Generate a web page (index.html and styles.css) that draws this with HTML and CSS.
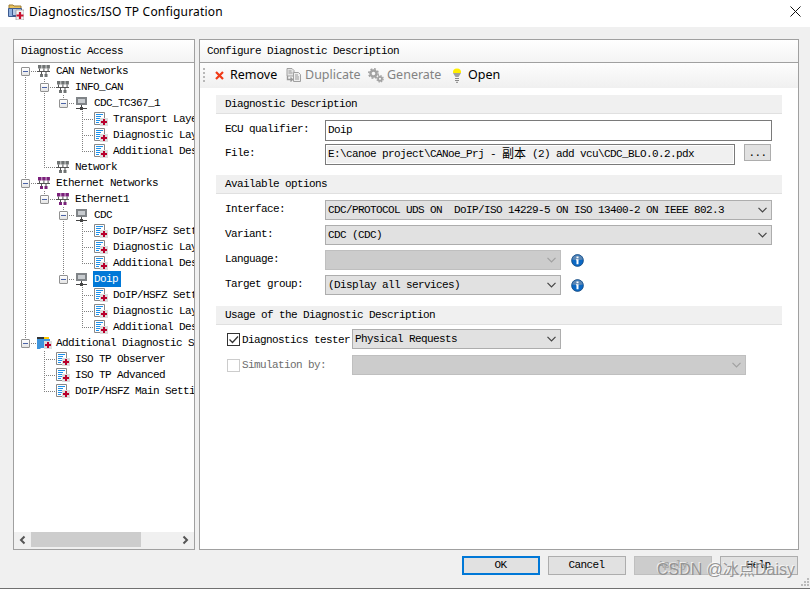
FILE: index.html
```html
<!DOCTYPE html>
<html lang="en">
<head>
  <meta charset="UTF-8">
  <meta name="viewport" content="width=device-width, initial-scale=1.0">
  <title>Diagnostics/ISO TP Configuration</title>
  <link rel="stylesheet" href="styles.css">
</head>
<body>

  <!-- shared icons -->
  <svg class="defs" width="0" height="0">
    <symbol id="net" viewBox="0 0 16 16">
      <path d="M1 2h3.500v3.500H1zM5.200 2h3.500v3.500H5.200zM9.400 2h3.500v3.500H9.400zM3 11h3v3H3zM7.500 11h3v3h-3z" fill="currentColor"/>
      <path d="M0 8.500h13M2.500 5.500v3M6.900 5.500v3M11.100 5.500v3M4.500 8.500v3M9 8.500v3" stroke="#555" fill="none"/>
    </symbol>
    <symbol id="ecu" viewBox="0 0 16 16">
      <path d="M2 3h9v6H2z" fill="#c8ccd0" stroke="#808488" stroke-width="2"/>
      <path d="M6.500 10v3M1 13.500h11" stroke="#444" fill="none"/>
      <path d="M5 12h3v3H5z" fill="#444"/>
    </symbol>
    <symbol id="doc" viewBox="0 0 16 16">
      <path d="M.5 1.500h10v12H.5z" fill="#fff" stroke="#888"/>
      <path d="M2 3.500h7M2 5.500h5M2 7.500h6M2 9.500h4M2 11.500h3" stroke="#1e90ea" fill="none"/>
      <path d="M6 7h8v8H6z" fill="#dcdcdc"/>
      <path d="M10 8v6M7 11h6" stroke="#b8002c" stroke-width="2" fill="none"/>
    </symbol>
    <symbol id="folder" viewBox="0 0 16 16">
      <path d="M0 2h7v2H0z" fill="#333"/>
      <path d="M7 2h5v2H7z" fill="#ffc800"/>
      <path d="M0 4h13v9H4l-1 1H0z" fill="#3d94dc"/>
      <path d="M7 6h8v8H7z" fill="#dcdcdc"/>
      <path d="M11 7v6M8 10h6" stroke="#b8002c" stroke-width="2" fill="none"/>
    </symbol>
    <symbol id="arrow" viewBox="0 0 9 6">
      <path d="M.5 .8l4 4 4-4" fill="none" stroke="currentColor" stroke-width="1.200"/>
    </symbol>
    <symbol id="info" viewBox="0 0 13 13">
      <circle cx="6.500" cy="6.500" r="5.900" fill="#0b68c4" stroke="#164678" stroke-width=".8"/>
      <path d="M1.200 5.600a5.400 5.400 0 0 1 10.600 0q-5.300 1.500-10.600 0z" fill="#5a86b4"/>
      <path d="M5.500 2.500h2v1.700h-2zM5 5.200h2.500v5h-2v-4H5z" fill="#fff"/>
    </symbol>
  </svg>

  <div class="window">
    <div class="titlebar">
      <svg class="app-icon" width="16" height="16" viewBox="0 0 16 16">
        <path d="M1 1h4l1 1h7v9H1z" fill="#e9c25c" stroke="#9c7a34"/>
        <path d="M.5 4.500h12v8H.5z" fill="#8fb0de" stroke="#3c5a90"/>
        <path d="M4.500 4.500h9v7h-9z" fill="#b7cbe8" stroke="#3c5a90"/>
        <path d="M8 6h8v10H8z" fill="#f2f2f2" stroke="#888" stroke-width=".6"/>
        <path d="M12 8v7M8.500 11.500h7" stroke="#c8102e" stroke-width="2.200"/>
      </svg>
      <span class="title">Diagnostics/ISO TP Configuration</span>
      <svg class="close" width="11" height="11" viewBox="0 0 11 11"><path d="M.5 .5l10 10M10.500 .5l-10 10" stroke="#111" fill="none"/></svg>
    </div>

    <div class="panels">
      <div class="panel left">
        <div class="panel-head">Diagnostic Access</div>
        <ul class="tree">
          <li>
            <div class="node"><i class="exp"></i><svg class="ico can"><use href="#net"/></svg><span>CAN Networks</span></div>
            <ul>
              <li>
                <div class="node"><i class="exp"></i><svg class="ico can"><use href="#net"/></svg><span>INFO_CAN</span></div>
                <ul>
                  <li>
                    <div class="node"><i class="exp"></i><svg class="ico"><use href="#ecu"/></svg><span>CDC_TC367_1</span></div>
                    <ul>
                      <li><div class="node leaf"><svg class="ico"><use href="#doc"/></svg><span>Transport Layer</span></div></li>
                      <li><div class="node leaf"><svg class="ico"><use href="#doc"/></svg><span>Diagnostic Layer</span></div></li>
                      <li><div class="node leaf"><svg class="ico"><use href="#doc"/></svg><span>Additional Descriptions</span></div></li>
                    </ul>
                  </li>
                </ul>
              </li>
              <li><div class="node leaf"><svg class="ico can"><use href="#net"/></svg><span>Network</span></div></li>
            </ul>
          </li>
          <li>
            <div class="node"><i class="exp"></i><svg class="ico eth"><use href="#net"/></svg><span>Ethernet Networks</span></div>
            <ul>
              <li>
                <div class="node"><i class="exp"></i><svg class="ico eth"><use href="#net"/></svg><span>Ethernet1</span></div>
                <ul>
                  <li>
                    <div class="node"><i class="exp"></i><svg class="ico"><use href="#ecu"/></svg><span>CDC</span></div>
                    <ul>
                      <li><div class="node leaf"><svg class="ico"><use href="#doc"/></svg><span>DoIP/HSFZ Settings</span></div></li>
                      <li><div class="node leaf"><svg class="ico"><use href="#doc"/></svg><span>Diagnostic Layer</span></div></li>
                      <li><div class="node leaf"><svg class="ico"><use href="#doc"/></svg><span>Additional Descriptions</span></div></li>
                    </ul>
                  </li>
                  <li>
                    <div class="node"><i class="exp"></i><svg class="ico"><use href="#ecu"/></svg><span class="selected">Doip</span></div>
                    <ul>
                      <li><div class="node leaf"><svg class="ico"><use href="#doc"/></svg><span>DoIP/HSFZ Settings</span></div></li>
                      <li><div class="node leaf"><svg class="ico"><use href="#doc"/></svg><span>Diagnostic Layer</span></div></li>
                      <li><div class="node leaf"><svg class="ico"><use href="#doc"/></svg><span>Additional Descriptions</span></div></li>
                    </ul>
                  </li>
                </ul>
              </li>
            </ul>
          </li>
          <li>
            <div class="node"><i class="exp"></i><svg class="ico"><use href="#folder"/></svg><span>Additional Diagnostic Settings</span></div>
            <ul>
              <li><div class="node leaf"><svg class="ico"><use href="#doc"/></svg><span>ISO TP Observer</span></div></li>
              <li><div class="node leaf"><svg class="ico"><use href="#doc"/></svg><span>ISO TP Advanced</span></div></li>
              <li><div class="node leaf"><svg class="ico"><use href="#doc"/></svg><span>DoIP/HSFZ Main Settings</span></div></li>
            </ul>
          </li>
        </ul>
        <div class="scrollbar">
          <svg width="17" height="16" viewBox="0 0 17 16"><path d="M10.500 4.500L7 8l3.500 3.500" fill="none" stroke="#555" stroke-width="2"/></svg>
          <div class="track"><div class="thumb"></div></div>
          <svg width="17" height="16" viewBox="0 0 17 16"><path d="M6.500 4.500L10 8l-3.500 3.500" fill="none" stroke="#555" stroke-width="2"/></svg>
        </div>
      </div>

      <div class="panel right">
        <div class="panel-head">Configure Diagnostic Description</div>
        <div class="toolbar">
          <div class="grip"></div>
          <div class="tool remove">
            <svg width="9" height="9" viewBox="0 0 9 9"><path d="M1 1l7 7M8 1L1 8" stroke="#f03a17" stroke-width="2.200"/></svg>
            <span>Remove</span>
          </div>
          <div class="tool duplicate off">
            <svg width="16" height="15" viewBox="0 0 16 15">
              <path d="M1 .5h5l2 2V8H1z" fill="#e4e4e4" stroke="#a0a0a0"/>
              <path d="M2.500 3h3M2.500 5h4" stroke="#999"/>
              <path d="M7.500 4.500h5l2 2v7h-7z" fill="#eee" stroke="#a0a0a0"/>
              <path d="M9 7h3M9 9h4M9 11h4" stroke="#999"/>
              <path d="M1.500 8v3.500H6M4.500 9.500l2 2-2 2" fill="none" stroke="#999" stroke-width="1.400"/>
            </svg>
            <span>Duplicate</span>
          </div>
          <div class="tool generate off">
            <svg width="16" height="15" viewBox="0 0 16 15">
              <circle cx="5.500" cy="5.500" r="3" fill="none" stroke="#a2a2a2" stroke-width="2.400"/>
              <circle cx="5.500" cy="5.500" r="4.700" fill="none" stroke="#a2a2a2" stroke-width="1.600" stroke-dasharray="1.900 1.790"/>
              <circle cx="12" cy="10.800" r="2" fill="none" stroke="#a2a2a2" stroke-width="1.800"/>
              <circle cx="12" cy="10.800" r="3.200" fill="none" stroke="#a2a2a2" stroke-width="1.200" stroke-dasharray="1.400 1.110"/>
            </svg>
            <span>Generate</span>
          </div>
          <div class="tool open">
            <svg width="10" height="15" viewBox="0 0 10 15">
              <path d="M1 5q-.5-4.500 4-4.500T9 5z" fill="#ffee00"/>
              <path d="M1 5h8L6.500 9h-3z" fill="#a0a0a0"/>
              <path d="M3 10.500h4M3 12.500h4M4 14.300h2" stroke="#888"/>
            </svg>
            <span>Open</span>
          </div>
        </div>

        <div class="form">
          <div class="section">Diagnostic Description</div>
          <div class="rows inputs">
            <div class="row"><label>ECU qualifier:</label><div class="input">Doip</div></div>
            <div class="row"><label>File:</label><div class="input readonly">E:\canoe project\CANoe_Prj - <span class="cjk">副本</span> (2) add vcu\CDC_BLO.0.2.pdx</div><div class="browse">...</div></div>
          </div>

          <div class="section">Available options</div>
          <div class="rows options">
            <div class="row"><label>Interface:</label><div class="combo">CDC/PROTOCOL UDS ON&nbsp; DoIP/ISO 14229-5 ON ISO 13400-2 ON IEEE 802.3<svg><use href="#arrow"/></svg></div></div>
            <div class="row"><label>Variant:</label><div class="combo">CDC (CDC)<svg><use href="#arrow"/></svg></div></div>
            <div class="row"><label>Language:</label><div class="combo short disabled"><svg><use href="#arrow"/></svg></div><svg class="info"><use href="#info"/></svg></div>
            <div class="row"><label>Target group:</label><div class="combo short">(Display all services)<svg><use href="#arrow"/></svg></div><svg class="info"><use href="#info"/></svg></div>
          </div>

          <div class="section">Usage of the Diagnostic Description</div>
          <div class="rows usage">
            <div class="row">
              <div class="check"><svg width="13" height="13" viewBox="0 0 13 13"><rect x=".5" y=".5" width="12" height="12" fill="#fff" stroke="#333"/><path d="M2.500 6.500l3 3 5.500-6" fill="none" stroke="#333" stroke-width="1.300"/></svg><span>Diagnostics tester</span></div>
              <div class="combo tester">Physical Requests<svg><use href="#arrow"/></svg></div>
            </div>
            <div class="row">
              <div class="check dim"><svg width="13" height="13" viewBox="0 0 13 13"><rect x=".5" y=".5" width="12" height="12" fill="#fff" stroke="#ccc"/></svg><span>Simulation by:</span></div>
              <div class="combo simulation disabled"><svg><use href="#arrow"/></svg></div>
            </div>
          </div>
        </div>
      </div>
    </div>

    <div class="buttons">
      <div class="btn primary">OK</div>
      <div class="btn">Cancel</div>
      <div class="btn disabled">Apply</div>
      <div class="btn">Help</div>
    </div>

    <svg class="size-grip" width="9" height="9" viewBox="0 0 9 9"><path d="M6 0h2v2H6zM3 3h2v2H3zM6 3h2v2H6zM0 6h2v2H0zM3 6h2v2H3zM6 6h2v2H6z" fill="#bbb"/></svg>
    <div class="watermark">CSDN @冰点Daisy</div>
  </div>

</body>
</html>
```
FILE: styles.css
```css
* {
  box-sizing: border-box;
}

body {
  margin: 0;
  font-family: "Liberation Mono", "Noto Sans CJK SC", monospace;
  font-size: 11px;
  letter-spacing: -0.6px;
  color: #000;
}

.defs {
  position: absolute;
}

.window {
  position: relative;
  width: 810px;
  height: 589px;
  background: #f0f0f0;
  border-bottom: 1px solid #707070;
  overflow: hidden;
}

.titlebar {
  display: flex;
  align-items: center;
  height: 27px;
  padding: 0 9px 4px 8px;
  background: #fff;
  font-family: "Noto Sans", "Open Sans", sans-serif;
  font-size: 12px;
  letter-spacing: 0.19px;
}

.title {
  flex: 1;
  margin-left: 5px;
}

/* panels */
.panels {
  display: flex;
  gap: 4px;
  padding: 12px 11px 0 13px;
}

.panel {
  display: flex;
  flex-direction: column;
  height: 511px;
  border: 1px solid #a0a0a0;
  background: #fff;
  overflow: hidden;
}

.left {
  width: 182px;
}

.right {
  width: 600px;
}

.panel-head {
  height: 23px;
  line-height: 23px;
  padding-left: 7px;
  border-bottom: 1px solid #a0a0a0;
  background: linear-gradient(#fff, #f4f4f4);
  white-space: pre;
}

/* tree */
.tree {
  flex: 1;
  overflow: hidden;
}

.tree,
.tree ul {
  list-style: none;
  margin: 0;
  padding: 0;
}

.tree {
  padding-left: 2px;
}

.tree li {
  padding-left: 19px;
  background-image:
    repeating-linear-gradient(#808080 0 1px, transparent 1px 2px),
    repeating-linear-gradient(90deg, #808080 0 1px, transparent 1px 2px);
  background-repeat: no-repeat;
  background-size: 1px 100%, 12px 1px;
  background-position: 9px 0, 9px 8px;
}

.tree li:last-child {
  background-size: 1px 8px, 12px 1px;
}

.tree > li:first-child {
  background-position: 9px 8px, 9px 8px;
}

.node {
  display: flex;
  align-items: center;
  height: 16px;
  margin-left: -19px;
  white-space: nowrap;
}

.node.leaf {
  margin-left: 0;
}

.exp {
  flex: none;
  width: 9px;
  height: 9px;
  margin: 0 5px;
  border: 1px solid #919191;
  border-radius: 1px;
  background: linear-gradient(#4b63a7, #4b63a7) center / 5px 1px no-repeat, linear-gradient(#fff, #e4e4e4);
}

.ico {
  flex: none;
  width: 16px;
  height: 16px;
  margin-left: 2px;
  color: #707474;
}

.ico.eth {
  color: #7b1f7b;
}

.node span {
  height: 16px;
  line-height: 16px;
  margin-left: 2px;
  padding: 0 2px 0 1px;
}

.node .selected {
  margin-left: 2px;
  padding: 0 3px 0 1px;
  background: #0078d7;
  color: #fff;
}

.scrollbar {
  display: flex;
  height: 17px;
  padding-bottom: 1px;
  background: #f0f0f0;
}

.track {
  flex: 1;
}

.thumb {
  width: 110px;
  height: 15px;
  background: #cdcdcd;
}

/* toolbar */
.toolbar {
  display: flex;
  align-items: center;
  height: 25px;
  padding-left: 3px;
  background: linear-gradient(#fdfdfd, #f0f0f0);
  font-family: "Noto Sans", "Open Sans", sans-serif;
  font-size: 12.5px;
  letter-spacing: 0;
}

.grip {
  width: 2px;
  height: 15px;
  background: repeating-linear-gradient(#b8b8b8 0 2px, transparent 2px 4px);
}

.tool {
  display: flex;
  align-items: center;
  white-space: nowrap;
}

.tool span {
  padding-bottom: 3px;
}

.tool.off {
  color: #838383;
}

.remove {
  width: 76px;
  margin-left: 10px;
  gap: 6px;
}

.duplicate {
  width: 82px;
  gap: 3px;
  margin-left: -5px;
}

.generate {
  width: 84px;
  gap: 3px;
}

.open {
  gap: 6px;
}

/* form */
.form {
  padding: 7px 16px 0;
}

.section {
  height: 19px;
  line-height: 19px;
  padding-left: 9px;
  border-bottom: 1px solid #e0e0e0;
  background: #f0f0f0;
}

.rows {
  display: flex;
  flex-direction: column;
}

.inputs {
  gap: 3px;
  padding: 6px 0 10px;
}

.options {
  gap: 5px;
  padding: 6px 0 11px;
}

.usage {
  gap: 6px;
  padding-top: 4px;
}

.row {
  display: flex;
}

.row label {
  width: 109px;
  padding-left: 9px;
  line-height: 19px;
}

.input {
  width: 447px;
  height: 21px;
  line-height: 18px;
  padding-left: 2px;
  border: 1px solid #7a7a7a;
  white-space: pre;
}

.input.readonly {
  width: 410px;
  background: #f0f0f0;
  box-shadow: inset 0 0 0 1px #fff;
}

.cjk {
  font-family: "Noto Sans CJK SC", sans-serif;
  font-size: 12px;
  line-height: 1;
  letter-spacing: 0;
  vertical-align: -1px;
}

.browse {
  width: 27px;
  height: 17px;
  margin-left: 9px;
  border: 1px solid #adadad;
  background: #e1e1e1;
  line-height: 17px;
  text-align: center;
}

.combo {
  display: flex;
  align-items: center;
  justify-content: space-between;
  width: 447px;
  height: 20px;
  padding: 0 4px 0 2px;
  border: 1px solid #adadad;
  background: #e1e1e1;
  color: #000;
  white-space: pre;
}

.combo svg {
  width: 9px;
  height: 6px;
  margin-left: auto;
  color: #444;
}

.combo.short {
  width: 236px;
}

.combo.tester {
  width: 209px;
}

.combo.simulation {
  width: 394px;
}

.combo.disabled {
  border-color: #bfbfbf;
  background: #ccc;
}

.combo.disabled svg {
  color: #a0a0a0;
}

.info {
  width: 13px;
  height: 13px;
  margin: 4px 0 0 10px;
}

.check {
  display: flex;
  align-items: center;
  width: 136px;
  padding: 1px 0 0 11px;
  gap: 2px;
  white-space: nowrap;
}

.check.dim {
  padding-top: 0;
  color: #6d6d6d;
}

/* bottom buttons */
.buttons {
  display: flex;
  justify-content: flex-end;
  gap: 8px;
  padding: 6px 12px 0 0;
}

.btn {
  width: 78px;
  height: 19px;
  padding-right: 1px;
  border: 1px solid #adadad;
  background: #e1e1e1;
  line-height: 17px;
  text-align: center;
}

.btn.primary {
  border: 2px solid #0078d7;
  line-height: 15px;
}

.btn.disabled {
  border-color: #bfbfbf;
  background: #ccc;
  color: #a0a0a0;
}

.size-grip {
  position: absolute;
  right: 0;
  bottom: 1px;
}

.watermark {
  position: absolute;
  left: 657px;
  top: 558px;
  font-family: "Liberation Sans", "Noto Sans CJK SC", sans-serif;
  font-size: 16px;
  line-height: 24px;
  letter-spacing: 0;
  color: rgba(140, 140, 140, 0.9);
  text-shadow: -1px -1px 0 rgba(255, 255, 255, 0.7);
  white-space: nowrap;
}
```
